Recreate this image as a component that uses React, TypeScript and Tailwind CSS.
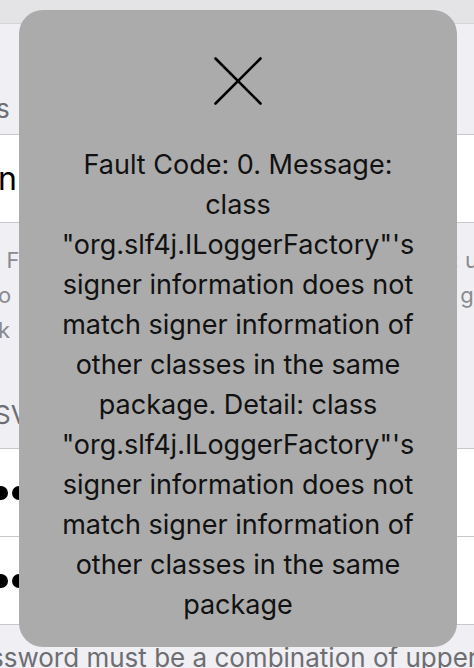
const message = [
  "Fault Code: 0. Message:",
  "class",
  "\"org.slf4j.ILoggerFactory\"'s",
  "signer information does not",
  "match signer information of",
  "other classes in the same",
  "package. Detail: class",
  "\"org.slf4j.ILoggerFactory\"'s",
  "signer information does not",
  "match signer information of",
  "other classes in the same",
  "package",
];

function Row({ children }: { children: React.ReactNode }) {
  return (
    <div className="flex h-[88px] items-center border-b border-[#c8c7cc] bg-white">
      {children}
    </div>
  );
}

function Dots() {
  return (
    <div className="-ml-[6px] flex gap-[4px]">
      <span className="size-[14px] rounded-full bg-black" />
      <span className="size-[14px] rounded-full bg-black" />
    </div>
  );
}

export default function App() {
  return (
    <div
      className="relative h-[668px] w-[474px] overflow-hidden bg-[#efeff4]"
      style={{ fontFamily: "Inter, 'Liberation Sans', sans-serif" }}
    >
      {/* page behind the alert */}
      <div className="h-[24px] border-b border-[#d4d4d8] bg-[#e4e4e6]" />
      <div className="flex h-[111px] items-end border-b border-[#c8c7cc] pb-[12px]">
        <span className="-ml-[4px] text-[26px] leading-none text-[#6d6d72]">s</span>
      </div>
      <Row>
        <span className="-ml-[2px] text-[32px] leading-none text-black">n</span>
      </Row>
      <div className="flex h-[225px] flex-col pt-[20px] text-[22px] leading-[35px] text-[#8a8a8f]">
        <div className="flex justify-between whitespace-nowrap">
          <span className="-ml-[6px]">: F</span>
          <span className="-mr-[4px]">: u</span>
        </div>
        <div className="flex justify-between whitespace-nowrap">
          <span className="-ml-[2px]">o</span>
          <span className="-mr-[6px]">g:</span>
        </div>
        <div className="flex justify-between whitespace-nowrap">
          <span className="-ml-[2px]">k</span>
          <span />
        </div>
        <div className="mt-auto pb-[20px] text-[26px] leading-none text-[#6d6d72]">
          <span className="-ml-[6px]">SV</span>
        </div>
      </div>
      <div className="border-t border-[#c8c7cc]">
        <Row>
          <Dots />
        </Row>
        <Row>
          <Dots />
        </Row>
      </div>
      <div className="whitespace-nowrap pt-[20px] text-[26px] leading-none text-[#6d6d72]">
        <span className="-ml-[10px]">ssword must be a combination of uppercase</span>
      </div>

      {/* alert */}
      <div className="absolute left-[19px] top-[10px] flex h-[637px] w-[438px] flex-col items-center rounded-[24px] bg-[#ababab]">
        <svg
          className="mt-[47px] size-[48px] text-black"
          viewBox="0 0 48 48"
          fill="none"
          stroke="currentColor"
          strokeWidth={2.6}
          strokeLinecap="round"
        >
          <path d="M1.5 1.5 46.5 46.5M46.5 1.5 1.5 46.5" />
        </svg>
        <div className="mt-[40px] text-center text-[27px] leading-[40px] text-[#111]">
          {message.map((line, i) => (
            <div key={i} className="whitespace-nowrap">
              {line}
            </div>
          ))}
        </div>
      </div>
    </div>
  );
}
